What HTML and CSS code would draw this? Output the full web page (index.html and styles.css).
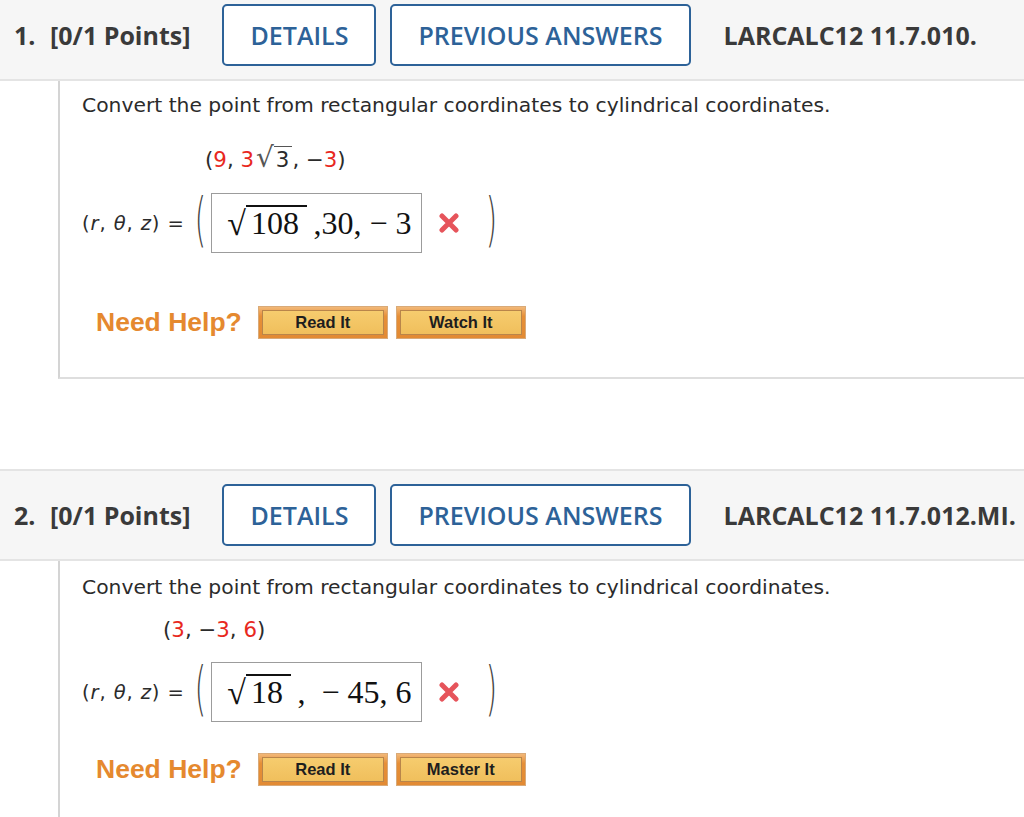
FILE: index.html
```html
<!DOCTYPE html>
<html lang="en">
<head>
    <meta charset="UTF-8">
    <meta name="viewport" content="width=device-width, initial-scale=1.0">
    <title>Assignment | WebAssign</title>
    <link rel="stylesheet" href="styles.css">
</head>
<body>
    <div class="page">

        <!-- Question 1 -->
        <div class="question">
            <div class="q-head">
                <span class="q-num">1.</span>
                <span class="q-points">[0/1 Points]</span>
                <a class="q-btn" href="#">DETAILS</a>
                <a class="q-btn" href="#">PREVIOUS ANSWERS</a>
                <span class="q-code">LARCALC12 11.7.010.</span>
            </div>
            <div class="q-body">
                <p class="prompt">Convert the point from rectangular coordinates to cylindrical coordinates.</p>
                <p class="point point-tall indent-lg">(<span class="red">9</span>, <span class="red">3</span><span class="radical">√</span><span class="radicand">3</span>, −<span class="red">3</span>)</p>
                <div class="answer-row">
                    <span class="answer-label">(<i>r</i>, <i>θ</i>, <i>z</i>) =</span>
                    <span class="paren">(</span>
                    <span class="answer-box">
                        <span class="m-sqrt">√</span><span class="m-radicand">108</span><span class="m-text">&thinsp;,30, − 3</span>
                    </span>
                    <svg class="wrong" width="22" height="20" viewBox="0 0 22 20">
                        <path d="M4 3 L18 17 M18 3 L4 17" stroke="#e6545b" stroke-width="5" stroke-linecap="round"/>
                    </svg>
                    <span class="paren">)</span>
                </div>
                <div class="help help-spaced">
                    <span class="help-label">Need Help?</span>
                    <a class="help-btn" href="#"><span>Read It</span></a>
                    <a class="help-btn" href="#"><span>Watch It</span></a>
                </div>
            </div>
        </div>

        <!-- Question 2 -->
        <div class="question">
            <div class="q-head">
                <span class="q-num">2.</span>
                <span class="q-points">[0/1 Points]</span>
                <a class="q-btn" href="#">DETAILS</a>
                <a class="q-btn" href="#">PREVIOUS ANSWERS</a>
                <span class="q-code">LARCALC12 11.7.012.MI.</span>
            </div>
            <div class="q-body">
                <p class="prompt">Convert the point from rectangular coordinates to cylindrical coordinates.</p>
                <p class="point indent-md">(<span class="red">3</span>, −<span class="red">3</span>, <span class="red">6</span>)</p>
                <div class="answer-row">
                    <span class="answer-label">(<i>r</i>, <i>θ</i>, <i>z</i>) =</span>
                    <span class="paren">(</span>
                    <span class="answer-box">
                        <span class="m-sqrt">√</span><span class="m-radicand">18</span><span class="m-text">&thinsp;,&ensp;− 45, 6</span>
                    </span>
                    <svg class="wrong" width="22" height="20" viewBox="0 0 22 20">
                        <path d="M4 3 L18 17 M18 3 L4 17" stroke="#e6545b" stroke-width="5" stroke-linecap="round"/>
                    </svg>
                    <span class="paren">)</span>
                </div>
                <div class="help">
                    <span class="help-label">Need Help?</span>
                    <a class="help-btn" href="#"><span>Read It</span></a>
                    <a class="help-btn" href="#"><span>Master It</span></a>
                </div>
            </div>
        </div>

    </div>
</body>
</html>
```

FILE: styles.css
```css
:root {
    --head-bg: #f6f6f6;
    --line: #dcdcdc;
    --ink: #333333;
    --blue: #2d6298;
    --red: #e8281e;
    --orange: #e5892f;
}

* {
    margin: 0;
    padding: 0;
    box-sizing: border-box;
}

body {
    background: white;
    color: var(--ink);
    font-family: 'Open Sans', sans-serif;
    overflow: hidden;
}

/* page is scrolled a little, the top of question 1 is cut off */
.page {
    margin-top: -11px;
}

.question + .question {
    margin-top: 90px;
}

.q-head {
    display: flex;
    align-items: center;
    background: var(--head-bg);
    border-top: 2px solid #e4e4e4;
    border-bottom: 2px solid #e4e4e4;
    padding: 13px 14px 13px 14px;
    font-size: 25px;
    font-weight: 700;
    color: #3a3a3a;
    white-space: nowrap;
}

.q-head > * {
    flex-shrink: 0;
}

.q-num {
    width: 36px;
}

.q-points {
    margin-right: 32px;
}

.q-btn {
    display: flex;
    align-items: center;
    height: 62px;
    padding: 0 26px 0 26px;
    margin-right: 14px;
    border: 2px solid var(--blue);
    border-radius: 5px;
    color: var(--blue);
    font-weight: 600;
    text-decoration: none;
    background: white;
}

.q-code {
    margin-left: 19px;
}

.q-body {
    margin-left: 58px;
    border-left: 2px solid #d4d4d4;
    border-bottom: 2px solid #dedede;
    padding: 12px 0 38px 22px;
    font-family: 'DejaVu Sans', Verdana, sans-serif;
    font-size: 20.3px;
    color: #2b2b2b;
}

.question:last-child .q-body {
    border-bottom: none;
    min-height: 260px;
    padding-top: 14px;
}

.prompt {
    line-height: 24px;
}

.point {
    font-size: 21.3px;
    line-height: 24px;
    margin-top: 19px;
}

.point-tall {
    line-height: 36px;
    margin-top: 23px;
}

.indent-lg {
    margin-left: 123px;
}

.indent-md {
    margin-left: 81px;
}

.red {
    color: var(--red);
}

.radical {
    color: #555;
    font-size: 28px;
    margin-left: 2px;
}

.radicand {
    border-top: 1px solid #555;
    padding: 0 3px 0 2px;
}

.answer-row {
    display: flex;
    align-items: center;
    margin-top: 17px;
}

.point-tall + .answer-row {
    margin-top: 12px;
}

.answer-label {
    font-size: 19.5px;
    letter-spacing: 0.9px;
}

.answer-label i {
    font-style: italic;
}

.paren {
    font-family: 'DejaVu Sans', sans-serif;
    font-weight: 200;
    font-size: 58px;
    line-height: 60px;
    color: #444;
    transform: scaleX(0.5);
    margin: 0 0 6px 0;
}

.answer-label + .paren {
    margin-left: 4px;
}

.answer-box {
    display: flex;
    align-items: center;
    height: 60px;
    width: 211px;
    padding-left: 15px;
    border: 1px solid #9c9c9c;
    font-family: 'Liberation Serif', 'Times New Roman', serif;
    font-size: 32px;
    color: #111;
}

.m-sqrt {
    font-size: 34px;
    margin-top: 2px;
}

.m-radicand {
    border-top: 2px solid #111;
    line-height: 32px;
    padding: 0 8px 0 5px;
    margin-top: -3px;
}

.wrong {
    margin: 0 20px 0 16px;
}

.help {
    display: flex;
    align-items: center;
    margin-top: 28px;
    padding-left: 14px;
}

.help-spaced {
    margin-top: 50px;
}

.help-label {
    font-family: 'Liberation Sans', Arial, sans-serif;
    font-size: 26.5px;
    font-weight: 700;
    color: var(--orange);
    margin-right: 16px;
}

.help-btn {
    display: block;
    width: 130px;
    height: 33px;
    margin-right: 8px;
    padding: 3px 3px 3px 3px;
    border: 1px solid #d9aa78;
    background: linear-gradient(#f2b878, #e68f37 30%, #e28a33);
    text-decoration: none;
}

.help-btn span {
    display: flex;
    align-items: center;
    justify-content: center;
    height: 100%;
    border: 1px solid #b9854a;
    background: linear-gradient(#f6cc6e, #f0bf5c);
    font-family: 'Liberation Sans', Arial, sans-serif;
    font-size: 16.5px;
    font-weight: 700;
    color: #1e1e1e;
}
```
